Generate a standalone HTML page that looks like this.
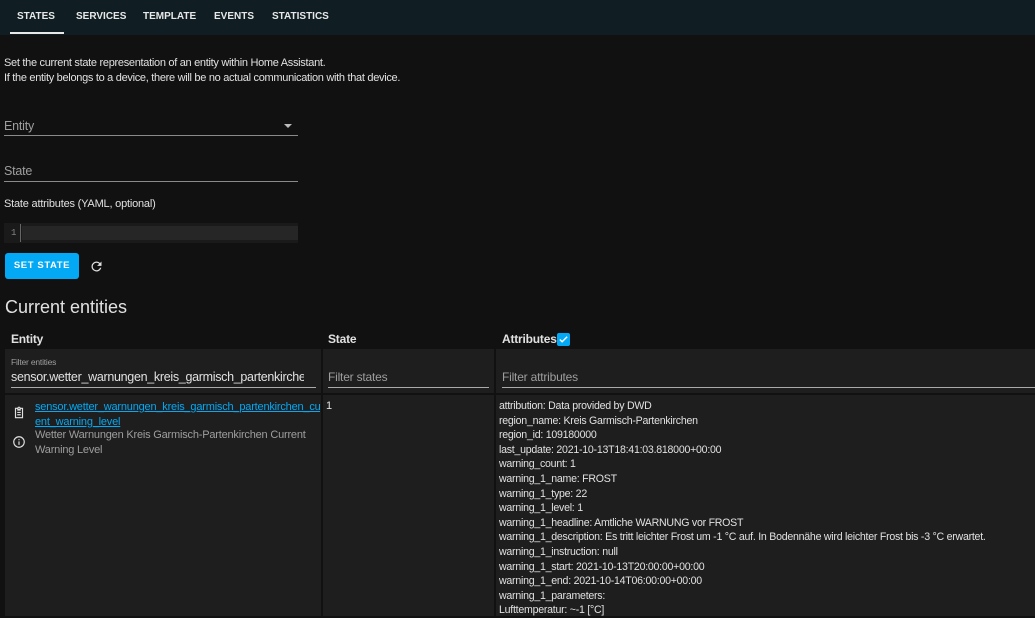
<!DOCTYPE html>
<html><head><meta charset="utf-8"><style>
*{margin:0;padding:0;box-sizing:border-box}
body{width:1035px;height:616px;overflow:hidden;background:#111111;font-family:"Liberation Sans",sans-serif;color:#e1e1e1;position:relative;font-size:11px;letter-spacing:-0.2px}
.a{position:absolute;white-space:nowrap}
.top{position:absolute;left:0;top:0;width:1035px;height:35px;background:#101e24}
.tab{position:absolute;top:11px;font-size:10px;font-weight:bold;color:#e8e8e8;letter-spacing:0}
.line{position:absolute;height:1px;background:#8a8a8a}
.cell{position:absolute;background:#1e1e1e}
.attr div{height:14.6px;line-height:14.6px}
</style></head><body>
<div class="top"></div>
<div class="tab" style="left:17px">STATES</div>
<div class="tab" style="left:76px">SERVICES</div>
<div class="tab" style="left:143px">TEMPLATE</div>
<div class="tab" style="left:214px">EVENTS</div>
<div class="tab" style="left:272px">STATISTICS</div>
<div style="position:absolute;left:10px;top:32px;width:54px;height:2px;background:#e8e8e8"></div>

<div class="a" style="left:4px;top:57px;font-size:11px;letter-spacing:-0.3px">Set the current state representation of an entity within Home Assistant.</div>
<div class="a" style="left:4px;top:72px;font-size:11px;letter-spacing:-0.3px">If the entity belongs to a device, there will be no actual communication with that device.</div>

<div class="a" style="left:4px;top:119px;font-size:12.5px;color:#9e9e9e">Entity</div>
<div class="a" style="left:284px;top:124px;width:0;height:0;border-left:4px solid transparent;border-right:4px solid transparent;border-top:4px solid #bbb"></div>
<div class="line" style="left:4px;top:135px;width:294px"></div>
<div class="a" style="left:4px;top:164px;font-size:12.5px;color:#9e9e9e">State</div>
<div class="line" style="left:4px;top:181px;width:294px"></div>
<div class="a" style="left:4px;top:198px">State attributes (YAML, optional)</div>
<div style="position:absolute;left:4px;top:223px;width:294px;height:20px;background:#1a1a1a"></div>
<div style="position:absolute;left:22px;top:226px;width:276px;height:14px;background:#262626"></div>
<div style="position:absolute;left:20px;top:224px;width:1px;height:18px;background:#666"></div>
<div class="a" style="left:11px;top:228px;font-size:9px;color:#888;font-family:'Liberation Mono',monospace">1</div>

<div style="position:absolute;left:5px;top:253px;width:74px;height:26px;background:#03a9f4;border-radius:3px;color:#fff;font-weight:bold;font-size:9.5px;letter-spacing:0.6px;text-align:center;line-height:26px">SET STATE</div>
<svg class="a" style="left:89px;top:259px" width="15" height="15" viewBox="0 0 24 24"><path fill="#e1e1e1" d="M17.65 6.35A7.958 7.958 0 0 0 12 4a8 8 0 1 0 7.73 10h-2.08A6 6 0 1 1 12 6c1.66 0 3.14.69 4.22 1.78L13 11h7V4l-2.35 2.35z"/></svg>

<div class="a" style="left:5px;top:297px;font-size:18px;letter-spacing:0">Current entities</div>

<div class="a" style="left:11px;top:332px;font-weight:bold;font-size:12px">Entity</div>
<div class="a" style="left:328px;top:332px;font-weight:bold;font-size:12px">State</div>
<div class="a" style="left:502px;top:332px;font-weight:bold;font-size:12px">Attributes</div>
<div style="position:absolute;left:557px;top:333px;width:13px;height:13px;background:#03a9f4;border-radius:2px"></div>
<svg class="a" style="left:558px;top:334px" width="11" height="11" viewBox="0 0 24 24"><path fill="none" stroke="#fff" stroke-width="3" d="M4 12l5 5L20 6"/></svg>

<div class="cell" style="left:5px;top:349px;width:316px;height:44px"></div>
<div class="cell" style="left:323px;top:349px;width:171px;height:44px"></div>
<div class="cell" style="left:496px;top:349px;width:539px;height:44px"></div>
<div class="cell" style="left:5px;top:395px;width:316px;height:221px"></div>
<div class="cell" style="left:323px;top:395px;width:171px;height:221px"></div>
<div class="cell" style="left:496px;top:395px;width:539px;height:221px"></div>

<div class="a" style="left:11px;top:357px;font-size:8.5px;color:#9e9e9e">Filter entities</div>
<div class="a" style="left:11px;top:370px;font-size:12.5px;letter-spacing:-0.3px;width:293px;overflow:hidden">sensor.wetter_warnungen_kreis_garmisch_partenkirchen</div>
<div class="line" style="left:11px;top:387px;width:305px;background:#aaa"></div>
<div class="a" style="left:328px;top:370px;font-size:12px;color:#9e9e9e">Filter states</div>
<div class="line" style="left:328px;top:387px;width:161px;background:#aaa"></div>
<div class="a" style="left:502px;top:370px;font-size:12px;color:#9e9e9e">Filter attributes</div>
<div class="line" style="left:502px;top:387px;width:533px;background:#aaa"></div>

<svg class="a" style="left:12px;top:406px" width="14" height="14" viewBox="0 0 24 24"><path fill="#e1e1e1" d="M19 3h-4.18C14.4 1.84 13.3 1 12 1s-2.4.84-2.82 2H5v18h14V3zm-7 0a1 1 0 1 1 0 2 1 1 0 0 1 0-2zm5 16H7V5h2v3h6V5h2v14zM9 10h6v2H9zm0 4h6v2H9z"/></svg>
<svg class="a" style="left:12px;top:435px" width="14" height="14" viewBox="0 0 24 24"><circle cx="12" cy="12" r="9" fill="none" stroke="#e1e1e1" stroke-width="2"/><path fill="#e1e1e1" d="M11 11h2v6h-2zm0-4h2v2h-2z"/></svg>
<div class="a" style="left:35px;top:400px;color:#03a9f4;text-decoration:underline;line-height:14.6px;width:285px;overflow:hidden">sensor.wetter_warnungen_kreis_garmisch_partenkirchen_curr<br>ent_warning_level</div>
<div class="a" style="left:35px;top:428px;color:#9e9e9e;line-height:14.6px">Wetter Warnungen Kreis Garmisch-Partenkirchen Current<br>Warning Level</div>
<div class="a" style="left:326px;top:400px">1</div>

<div class="a attr" style="left:499px;top:399px;font-size:10.6px;letter-spacing:-0.25px">
<div>attribution: Data provided by DWD</div>
<div>region_name: Kreis Garmisch-Partenkirchen</div>
<div>region_id: 109180000</div>
<div>last_update: 2021-10-13T18:41:03.818000+00:00</div>
<div>warning_count: 1</div>
<div>warning_1_name: FROST</div>
<div>warning_1_type: 22</div>
<div>warning_1_level: 1</div>
<div>warning_1_headline: Amtliche WARNUNG vor FROST</div>
<div>warning_1_description: Es tritt leichter Frost um -1 °C auf. In Bodennähe wird leichter Frost bis -3 °C erwartet.</div>
<div>warning_1_instruction: null</div>
<div>warning_1_start: 2021-10-13T20:00:00+00:00</div>
<div>warning_1_end: 2021-10-14T06:00:00+00:00</div>
<div>warning_1_parameters:</div>
<div>Lufttemperatur: ~-1 [°C]</div>
</div>
</body></html>
